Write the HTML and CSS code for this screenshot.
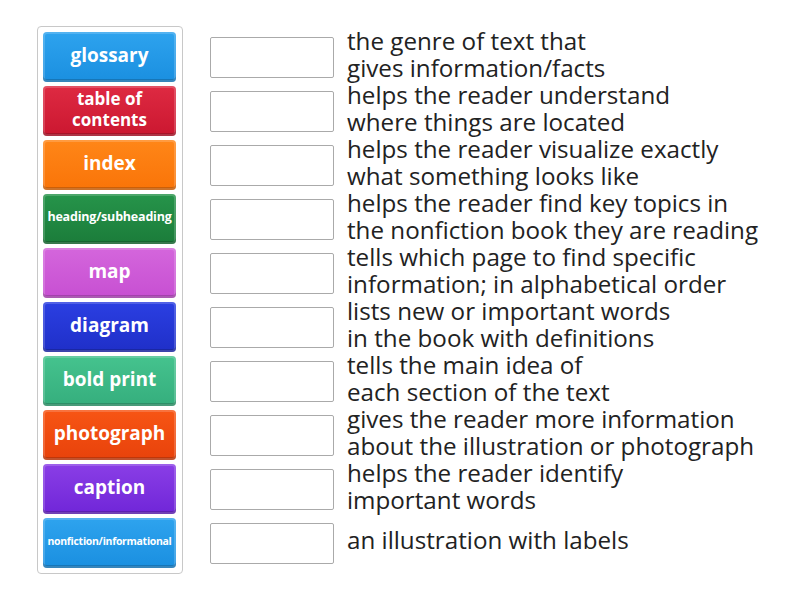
FILE: index.html
```html
<!doctype html>
<html lang="en">
<head>
<meta charset="utf-8">
<title>Text features match up</title>
<link rel="stylesheet" href="styles.css">
</head>
<body>

<div id="game">

  <!-- draggable answer tiles -->
  <div class="tiles">
    <div class="tile blue"><span>glossary</span></div>
    <div class="tile red"><span class="two-lines">table of<br>contents</span></div>
    <div class="tile orange"><span>index</span></div>
    <div class="tile dark-green"><span class="small">heading/subheading</span></div>
    <div class="tile pink"><span>map</span></div>
    <div class="tile royal"><span>diagram</span></div>
    <div class="tile mint"><span>bold print</span></div>
    <div class="tile flame"><span>photograph</span></div>
    <div class="tile purple"><span>caption</span></div>
    <div class="tile blue"><span class="tiny">nonfiction/informational</span></div>
  </div>

  <!-- drop slots with their definitions -->
  <div class="rows">
    <div class="row"><div class="slot"></div><p class="clue">the genre of text that<br>gives information/facts</p></div>
    <div class="row"><div class="slot"></div><p class="clue">helps the reader understand<br>where things are located</p></div>
    <div class="row"><div class="slot"></div><p class="clue">helps the reader visualize exactly<br>what something looks like</p></div>
    <div class="row"><div class="slot"></div><p class="clue">helps the reader find key topics in<br>the nonfiction book they are reading</p></div>
    <div class="row"><div class="slot"></div><p class="clue">tells which page to find specific<br>information; in alphabetical order</p></div>
    <div class="row"><div class="slot"></div><p class="clue">lists new or important words<br>in the book with definitions</p></div>
    <div class="row"><div class="slot"></div><p class="clue">tells the main idea of<br>each section of the text</p></div>
    <div class="row"><div class="slot"></div><p class="clue">gives the reader more information<br>about the illustration or photograph</p></div>
    <div class="row"><div class="slot"></div><p class="clue">helps the reader identify<br>important words</p></div>
    <div class="row"><div class="slot"></div><p class="clue">an illustration with labels</p></div>
  </div>

</div>

</body>
</html>
```

FILE: styles.css
```css
body {
  background-color: white;
  font-family: "Open Sans", "DejaVu Sans", sans-serif;
  margin: 0;
}

#game {
  align-items: flex-start;
  display: flex;
  padding: 26px 0 0 37px;
}

#game .tiles {
  border: 1px solid #c8c8c8;
  border-radius: 4px;
  display: flex;
  flex-direction: column;
  gap: 4px;
  padding: 5px 6px 5px 5px;
  width: 133px;
}

#game .tile {
  align-items: center;
  border-radius: 4px;
  box-shadow: inset 0 -3px 0 rgba(0, 0, 0, 0.18), inset 0 0 0 2px rgba(255, 255, 255, 0.18);
  box-sizing: border-box;
  color: white;
  display: flex;
  font-size: 19px;
  font-weight: bold;
  height: 50px;
  justify-content: center;
  padding-bottom: 5px;
  text-align: center;
  white-space: nowrap;
}

#game .tile .two-lines {
  font-size: 17px;
  line-height: 21px;
}

#game .tile .small {
  font-size: 12.5px;
  letter-spacing: -0.2px;
}

#game .tile .tiny {
  font-size: 10.5px;
  letter-spacing: -0.3px;
}

#game .tile.blue {
  background: linear-gradient(#2ea3ee, #1a8fe0);
}
#game .tile.red {
  background: linear-gradient(#de2a42, #cb1730);
}
#game .tile.orange {
  background: linear-gradient(#ff8618, #f97408);
}
#game .tile.dark-green {
  background: linear-gradient(#26944a, #1b7c3a);
}
#game .tile.pink {
  background: linear-gradient(#d466dc, #c74fd2);
}
#game .tile.royal {
  background: linear-gradient(#2b3fe2, #1f2fc8);
}
#game .tile.mint {
  background: linear-gradient(#45c38e, #35ae7d);
}
#game .tile.flame {
  background: linear-gradient(#f75514, #e8420b);
}
#game .tile.purple {
  background: linear-gradient(#8a3ee6, #7026d8);
}

#game .rows {
  display: flex;
  flex-direction: column;
  gap: 4px;
  padding-top: 6px;
}

#game .row {
  align-items: center;
  display: flex;
  height: 50px;
}

#game .slot {
  border: 1px solid #aaa;
  border-radius: 2px;
  box-sizing: border-box;
  flex-shrink: 0;
  height: 41px;
  margin-left: 27px;
  width: 124px;
}

#game .clue {
  color: #222;
  font-size: 24.2px;
  line-height: 27px;
  margin: -7px 0 0 13px;
  white-space: nowrap;
}
```
